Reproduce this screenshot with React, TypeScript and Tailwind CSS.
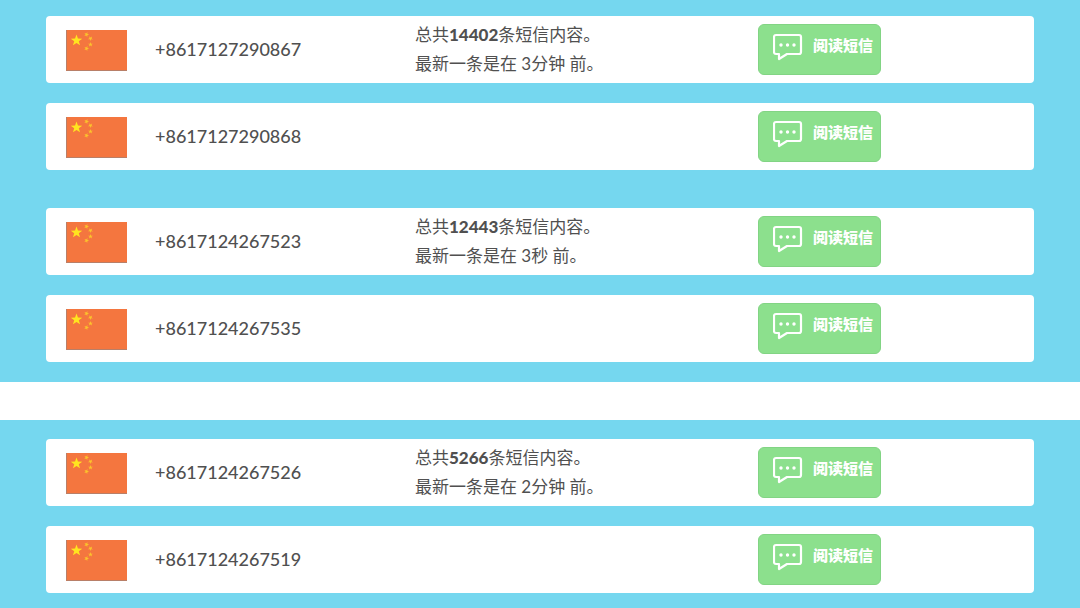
import React from "react";

type PhoneInfo = {
  phone: string;
  total?: number;
  latest?: string;
};

const topGroups: Array<Array<PhoneInfo>> = [
  [
    { phone: "+8617127290867", total: 14402, latest: "3分钟" },
    { phone: "+8617127290868" },
  ],
  [
    { phone: "+8617124267523", total: 12443, latest: "3秒" },
    { phone: "+8617124267535" },
  ],
];

const bottomGroup: Array<PhoneInfo> = [
  { phone: "+8617124267526", total: 5266, latest: "2分钟" },
  { phone: "+8617124267519" },
];

const STAR = "0,-10 2.4,-3.2 9.5,-3.1 3.8,1.2 5.9,8.1 0,4 -5.9,8.1 -3.8,1.2 -9.5,-3.1 -2.4,-3.2";

function ChinaFlag() {
  return (
    <svg className="mt-px" width="61" height="41" viewBox="0 0 61 41" role="img" aria-label="中国">
      <rect width="61" height="41" fill="#f4763f" />
      <path d="M0.5 0V40.5H61" fill="none" stroke="#b87f68" />
      <polygon points={STAR} transform="translate(10.5 10.5) scale(0.6)" fill="#ffe51f" />
      <g fill="#fbc42c">
        <polygon points={STAR} transform="translate(20.5 4.5) rotate(20) scale(0.26)" />
        <polygon points={STAR} transform="translate(24.5 8.5) rotate(40) scale(0.26)" />
        <polygon points={STAR} transform="translate(24.5 14.5) scale(0.26)" />
        <polygon points={STAR} transform="translate(20.5 18.5) rotate(20) scale(0.26)" />
      </g>
    </svg>
  );
}

function MessageIcon() {
  return (
    <svg width="30" height="28" viewBox="0 0 30 28" fill="none" aria-hidden="true">
      <path
        d="M3 2H26Q28 2 28 4V19Q28 21 26 21H14L6 26V21H3Q1 21 1 19V4Q1 2 3 2Z"
        stroke="#fff"
        strokeWidth="2.2"
        strokeLinejoin="round"
      />
      <circle cx="8" cy="12" r="1.7" fill="#fff" />
      <circle cx="14.5" cy="12" r="1.7" fill="#fff" />
      <circle cx="21" cy="12" r="1.7" fill="#fff" />
    </svg>
  );
}

function PhoneCard(props: { info: PhoneInfo }) {
  const { phone, total, latest } = props.info;

  return (
    <li className="grid min-h-[67px] grid-cols-[89px_260fr_343fr_276fr] items-center rounded bg-white pl-5">
      <ChinaFlag />
      <p className="pb-0.5 text-[18px] leading-6 font-medium">{phone}</p>
      <div className="pb-px text-[17px] leading-[29px]">
        {total && (
          <>
            <p>
              总共<b className="font-black">{total}</b>条短信内容。
            </p>
            <p>最新一条是在 {latest} 前。</p>
          </>
        )}
      </div>
      <div className="flex">
        <button
          type="button"
          className="flex h-[51px] w-[123px] cursor-pointer items-start gap-2.5 rounded-md border border-[#82d484] bg-[#8ce08d] pt-2 pl-3.5 text-[15px] leading-6 font-black whitespace-nowrap text-white"
        >
          <MessageIcon />
          阅读短信
        </button>
      </div>
    </li>
  );
}

function PhoneList(props: { items: Array<PhoneInfo> }) {
  return (
    <ul className="flex flex-col gap-5">
      {props.items.map((info) => (
        <PhoneCard key={info.phone} info={info} />
      ))}
    </ul>
  );
}

export default function App() {
  return (
    <main className="bg-white font-['Lato','Noto_Sans_CJK_SC',sans-serif] text-[#505050]" lang="zh-CN">
      <section className="flex flex-col gap-[38px] bg-[#75d7ef] px-[46px] pt-4 pb-5">
        {topGroups.map((items) => (
          <PhoneList key={items[0].phone} items={items} />
        ))}
      </section>
      <section className="mt-[38px] bg-[#75d7ef] px-[46px] pt-[19px] pb-[15px]">
        <PhoneList items={bottomGroup} />
      </section>
    </main>
  );
}
